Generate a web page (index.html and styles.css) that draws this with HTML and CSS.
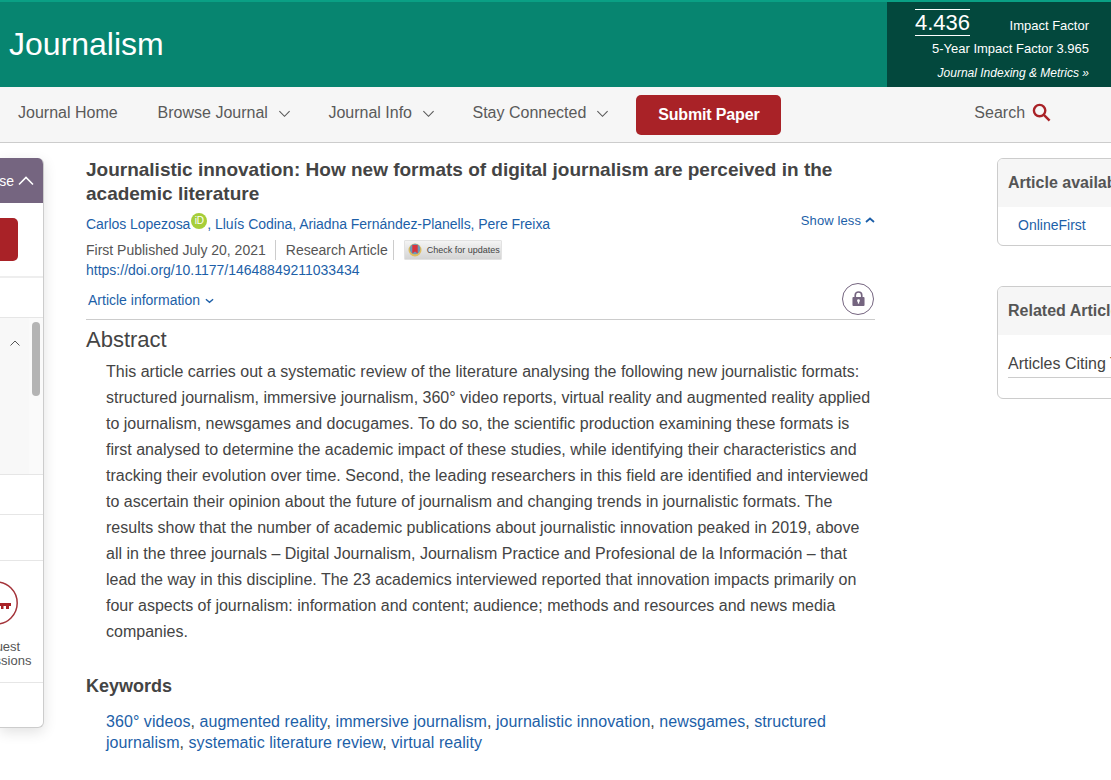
FILE: index.html
```html
<!DOCTYPE html>
<html lang="en">
<head>
  <meta charset="UTF-8">
  <title>Journalism</title>
  <link rel="stylesheet" href="styles.css">
</head>
<body>

  <header class="masthead">
    <div class="journal-title">Journalism</div>
    <div class="metrics">
      <div class="metric-row">
        <span class="metric-big">4.436</span>
        <span class="metric-label">Impact Factor</span>
      </div>
      <div class="metric-five">5-Year Impact Factor 3.965</div>
      <div class="metric-link">Journal Indexing &amp; Metrics »</div>
    </div>
  </header>

  <nav class="topnav">
    <a class="nav-item home">Journal Home</a>
    <a class="nav-item">Browse Journal
      <svg class="nav-chev" viewBox="0 0 14 8"><path d="M1.5 1 7 6.5 12.5 1"/></svg>
    </a>
    <a class="nav-item">Journal Info
      <svg class="nav-chev" viewBox="0 0 14 8"><path d="M1.5 1 7 6.5 12.5 1"/></svg>
    </a>
    <a class="nav-item">Stay Connected
      <svg class="nav-chev" viewBox="0 0 14 8"><path d="M1.5 1 7 6.5 12.5 1"/></svg>
    </a>
    <a class="submit-btn">Submit Paper</a>
    <a class="search-link">Search
      <svg class="search-icon" viewBox="0 0 20 20"><circle cx="8" cy="8" r="6"/><path d="M12.5 12.5 18.5 18.5"/></svg>
    </a>
  </nav>

  <main class="page">
    <aside class="tools">
      <div class="tools-head">
        <span>Close</span>
        <svg class="tools-chev" viewBox="0 0 16 10"><path d="M1 8.5 8 1.500 15 8.500"/></svg>
      </div>
      <div class="tools-access">
        <div class="tools-red"></div>
      </div>
      <div class="tools-blank"></div>
      <div class="tools-outline">
        <svg class="outline-chev" viewBox="0 0 10 6"><path d="M.5 5.500 5 1l4.500 4.500"/></svg>
        <div class="outline-track"><div class="outline-thumb"></div></div>
      </div>
      <div class="tools-row short"></div>
      <div class="tools-row tall"></div>
      <div class="tools-perm">
        <svg class="perm-icon" viewBox="0 0 44 44">
          <circle cx="22" cy="22" r="21.200"/>
          <path class="key" d="M10 22H37V25H35V28H32V25H29.500V28H27V25H10Z"/>
        </svg>
        <div class="perm-text">Request<br>Permissions</div>
      </div>
    </aside>

    <article class="article">
      <h1 class="article-title">Journalistic innovation: How new formats of digital journalism are perceived in the academic literature</h1>

      <div class="authors-row">
        <div class="authors">
          <a>Carlos Lopezosa</a><span class="orcid">iD</span><a>, Lluís Codina, Ariadna Fernández-Planells, Pere Freixa</a>
        </div>
        <a class="show-less">Show less
          <svg class="show-chev" viewBox="0 0 10 6"><path d="M1 5 5 1.500 9 5"/></svg>
        </a>
      </div>

      <div class="pub-row">
        <span class="pub-cell">First Published July 20, 2021</span>
        <span class="pub-cell">Research Article</span>
        <span class="updates">
          <svg class="updates-icon" viewBox="0 0 14 14">
            <circle cx="7" cy="7" r="6.500" fill="#e0bd5e"/>
            <circle cx="7" cy="6" r="5.300" fill="#6d9ab8"/>
            <path d="M4.300 2H9.700V10.500L7 8.500 4.300 10.500Z" fill="#d8343c"/>
          </svg>
          Check for updates
        </span>
      </div>
      <a class="doi">https://doi.org/10.1177/14648849211033434</a>

      <div class="info-row">
        <a class="info-link">Article information
          <svg class="info-chev" viewBox="0 0 10 6"><path d="M1 1 5 4.500 9 1"/></svg>
        </a>
        <span class="lock">
          <svg class="lock-icon" viewBox="0 0 14 16">
            <path class="shackle" d="M3.500 7V4.500a3.500 3.500 0 0 1 7 0V7"/>
            <path d="M1.500 6.500h11a1 1 0 0 1 1 1V15a1 1 0 0 1-1 1h-11a1 1 0 0 1-1-1V7.500a1 1 0 0 1 1-1Z"/>
            <circle class="keyhole" cx="7" cy="10.300" r="1.500"/>
            <rect class="keyhole" x="6.300" y="10.500" width="1.400" height="3"/>
          </svg>
        </span>
      </div>

      <h2 class="abstract-title">Abstract</h2>
      <p class="abstract">This article carries out a systematic review of the literature analysing the following new journalistic formats: structured journalism, immersive journalism, 360° video reports, virtual reality and augmented reality applied to journalism, newsgames and docugames. To do so, the scientific production examining these formats is first analysed to determine the academic impact of these studies, while identifying their characteristics and tracking their evolution over time. Second, the leading researchers in this field are identified and interviewed to ascertain their opinion about the future of journalism and changing trends in journalistic formats. The results show that the number of academic publications about journalistic innovation peaked in 2019, above all in the three journals – Digital Journalism, Journalism Practice and Profesional de la Información – that lead the way in this discipline. The 23 academics interviewed reported that innovation impacts primarily on four aspects of journalism: information and content; audience; methods and resources and news media companies.</p>

      <h3 class="keywords-title">Keywords</h3>
      <p class="keywords"><a>360° videos</a>, <a>augmented reality</a>, <a>immersive journalism</a>, <a>journalistic innovation</a>, <a>newsgames</a>, <a>structured</a> <a>journalism</a>, <a>systematic literature review</a>, <a>virtual reality</a></p>
    </article>

    <aside class="side">
      <section class="side-card avail">
        <div class="side-head">Article available in:</div>
        <div class="side-body"><a>OnlineFirst</a></div>
      </section>
      <section class="side-card related">
        <div class="side-head">Related Articles</div>
        <div class="side-list"><div class="side-line">Articles Citing This One</div></div>
      </section>
    </aside>
  </main>

</body>
</html>
```

FILE: styles.css
```css
* {
  margin: 0;
  padding: 0;
  box-sizing: border-box;
}

body {
  background: #fff;
  height: 780px;
  overflow: hidden;
  font-family: "Liberation Sans", Arial, sans-serif;
  color: #444;
}

a {
  color: #1d5fa8;
  text-decoration: none;
}

.masthead {
  height: 87px;
  display: flex;
  justify-content: space-between;
  background: #078570;
  border-top: 2px solid #0aa085;
}

.journal-title {
  padding: 23px 0 0 9px;
  font-size: 32px;
  line-height: 38px;
  color: #fff;
}

.metrics {
  width: 224px;
  background: #03483d;
  color: #fff;
  padding: 7px 22px 0 28px;
}

.metric-row {
  display: flex;
  justify-content: space-between;
  align-items: center;
}

.metric-big {
  font-size: 22px;
  line-height: 25px;
  border-top: 1px solid #fff;
  border-bottom: 1px solid #fff;
}

.metric-label {
  font-size: 13px;
  padding-top: 5px;
}

.metric-five {
  font-size: 13px;
  text-align: right;
  margin-top: 5px;
  line-height: 16px;
}

.metric-link {
  font-size: 12px;
  font-style: italic;
  text-align: right;
  margin-top: 9px;
  line-height: 15px;
}

.topnav {
  height: 56px;
  display: flex;
  align-items: center;
  background: #f6f6f6;
  border-bottom: 1px solid #ccc;
  padding: 0 0 4px 18px;
}

.nav-item {
  display: flex;
  align-items: center;
  font-size: 16px;
  color: #5a5a5a;
  margin-right: 37.5px;
}

.nav-item.home {
  margin-right: 40px;
}

.nav-chev {
  width: 13px;
  height: 8px;
  margin-left: 10px;
  margin-top: 3px;
  fill: none;
  stroke: #5a5a5a;
  stroke-width: 1.200;
}

.submit-btn {
  width: 145px;
  height: 40px;
  margin-left: -10.500px;
  margin-top: 5px;
  display: flex;
  align-items: center;
  justify-content: center;
  background: #a92227;
  border-radius: 5px;
  color: #fff;
  font-size: 16px;
  font-weight: bold;
  letter-spacing: -0.150px;
}

.search-link {
  display: flex;
  align-items: center;
  margin-left: 193px;
  font-size: 16px;
  color: #5a5a5a;
}

.search-icon {
  width: 19px;
  height: 19px;
  margin-left: 7px;
  fill: none;
  stroke: #a92227;
  stroke-width: 2.500;
}

.page {
  display: flex;
  align-items: flex-start;
  padding-top: 15px;
  height: 637px;
  overflow: hidden;
}

.tools {
  flex: none;
  width: 44px;
  height: 570px;
  border: 1px solid #ccc;
  border-width: 0 1px 1px 0;
  border-radius: 0 6px 6px 0;
  box-shadow: 0 4px 14px rgba(0, 0, 0, 0.12);
  overflow: hidden;
  background: #fff;
}

.tools-head {
  height: 45px;
  background: #756580;
  color: #fff;
  font-size: 14px;
  display: flex;
  align-items: center;
  justify-content: flex-end;
  gap: 4px;
  padding-right: 9px;
  white-space: nowrap;
}

.tools-chev {
  flex: none;
  width: 16px;
  height: 10px;
  fill: none;
  stroke: #fff;
  stroke-width: 1.600;
}

.tools-access {
  height: 75px;
  padding-top: 15px;
  border-bottom: 2px solid #eee;
}

.tools-red {
  width: 18px;
  height: 43px;
  background: #a92227;
  border-radius: 0 5px 5px 0;
}

.tools-blank {
  height: 40px;
  border-bottom: 1px solid #e6e6e6;
}

.tools-outline {
  position: relative;
  height: 157px;
  background: #f8f8f8;
  border-bottom: 1px solid #e6e6e6;
}

.outline-chev {
  position: absolute;
  left: 10px;
  top: 22px;
  width: 10px;
  height: 6px;
  fill: none;
  stroke: #555;
  stroke-width: 1;
}

.outline-track {
  position: absolute;
  right: 0;
  top: 0;
  width: 14px;
  height: 100%;
  background: #fafafa;
}

.outline-thumb {
  width: 8px;
  height: 74px;
  margin: 4px 0 0 3px;
  background: #b4b4b4;
  border-radius: 4px;
}

.tools-row.short {
  height: 40px;
  border-bottom: 1px solid #e6e6e6;
}

.tools-row.tall {
  height: 46px;
  border-bottom: 1px solid #e6e6e6;
}

.tools-perm {
  height: 122px;
  border-bottom: 1px solid #e6e6e6;
  display: flex;
  flex-direction: column;
  align-items: flex-end;
  overflow: hidden;
}

.perm-icon {
  flex: none;
  width: 44px;
  height: 44px;
  margin: 20px 25px 0 0;
  fill: none;
  stroke: #a4343a;
  stroke-width: 1.500;
}

.perm-icon .key {
  fill: #a92227;
  stroke: none;
}

.perm-text {
  flex: none;
  width: 90px;
  margin: 15px 2px 0 0;
  text-align: center;
  font-size: 13px;
  line-height: 14px;
  color: #555;
  white-space: nowrap;
}

.article {
  flex: none;
  width: 789px;
  margin-left: 42px;
}

.article-title {
  font-size: 19px;
  line-height: 24px;
  font-weight: bold;
  color: #444;
}

.authors-row {
  display: flex;
  justify-content: space-between;
  margin-top: 7px;
}

.authors {
  display: flex;
  font-size: 14px;
  line-height: 20px;
  padding-top: 1px;
  letter-spacing: -0.050px;
}

.orcid {
  width: 16px;
  height: 16px;
  margin: -1px 0 0 1px;
  border-radius: 50%;
  background: #a6ce39;
  color: #fff;
  font-size: 10px;
  line-height: 16px;
  text-align: center;
}

.show-less {
  display: flex;
  align-items: center;
  height: 20px;
  margin-top: -3px;
  font-size: 13px;
  letter-spacing: 0.100px;
}

.show-chev {
  width: 10px;
  height: 6px;
  margin-left: 4px;
  fill: none;
  stroke: #1d5fa8;
  stroke-width: 1.800;
}

.pub-row {
  display: flex;
  align-items: center;
  margin-top: 6px;
  font-size: 14px;
  line-height: 20px;
  color: #555;
}

.pub-cell {
  padding-right: 9px;
  margin-right: 10px;
  border-right: 1px solid #ccc;
}

.pub-cell + .pub-cell {
  padding-right: 5px;
  margin-right: 10px;
}

.updates {
  display: flex;
  align-items: center;
  gap: 5px;
  width: 98px;
  height: 20px;
  padding-left: 3px;
  background: linear-gradient(#f4f4f4, #d4d4d4);
  border: 1px solid #e2e2e2;
  border-radius: 1px;
  font-size: 9px;
  color: #444;
  white-space: nowrap;
}

.updates-icon {
  flex: none;
  width: 14px;
  height: 14px;
}

.doi {
  display: block;
  font-size: 14px;
  line-height: 20px;
}

.info-row {
  display: flex;
  justify-content: space-between;
  align-items: center;
  height: 40px;
  padding-left: 2px;
  border-bottom: 1px solid #ccc;
}

.info-link {
  display: flex;
  align-items: center;
  font-size: 14px;
}

.info-chev {
  width: 9px;
  height: 6px;
  margin-left: 5px;
  margin-top: 2px;
  fill: none;
  stroke: #1d5fa8;
  stroke-width: 1.500;
}

.lock {
  display: flex;
  align-items: center;
  justify-content: center;
  width: 32px;
  height: 32px;
  margin: -2px 1px 0 0;
  border: 1px solid #756580;
  border-radius: 50%;
}

.lock-icon {
  width: 13px;
  height: 15px;
  fill: #756580;
}

.lock-icon .shackle {
  fill: none;
  stroke: #756580;
  stroke-width: 1.800;
}

.lock-icon .keyhole {
  fill: #fff;
}

.abstract-title {
  font-size: 22px;
  line-height: 26px;
  font-weight: normal;
  margin-top: 7px;
}

.abstract {
  margin-top: 6px;
  padding-left: 20px;
  font-size: 16px;
  line-height: 26px;
  color: #444;
}

.keywords-title {
  margin-top: 30px;
  font-size: 18px;
  line-height: 22px;
  font-weight: bold;
}

.keywords {
  margin-top: 14px;
  padding-left: 20px;
  font-size: 16px;
  line-height: 21px;
  letter-spacing: 0.060px;
  color: #444;
  width: 760px;
}

.side {
  flex: none;
  width: 250px;
  margin-left: 122px;
}

.side-card {
  border: 1px solid #ccc;
  border-radius: 6px;
  overflow: hidden;
  white-space: nowrap;
}

.side-card.related {
  margin-top: 40px;
}

.side-head {
  height: 48px;
  padding-left: 10px;
  background: #f6f6f6;
  font-size: 16px;
  font-weight: bold;
  line-height: 48px;
  color: #555;
}

.side-body {
  height: 38px;
  padding: 8px 0 0 20px;
  font-size: 14px;
  line-height: 20px;
}

.side-list {
  height: 63px;
  padding: 19px 0 0 10px;
  font-size: 16px;
  line-height: 20px;
  color: #444;
}

.side-line {
  height: 24px;
  border-bottom: 1px solid #ccc;
}
```
